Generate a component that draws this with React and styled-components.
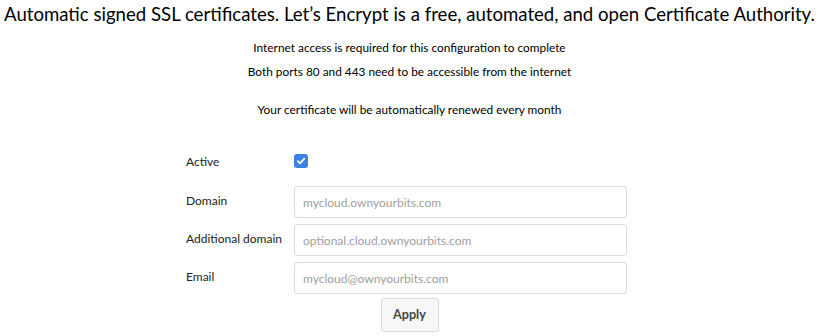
import styled, { createGlobalStyle } from "styled-components"

const GlobalStyle = createGlobalStyle`
    html, body {
        margin: 0;
        padding: 0;
        background: #ffffff;
        font-family: Lato, "Open Sans", sans-serif;
        color: #000000;
    }
`

const Page = styled.div`
    display: flex;
    flex-direction: column;
    align-items: center;
    width: 819px;
`

const Title = styled.h2`
    font-size: 18.6px;
    font-weight: 400;
    margin: 2px 0 0 0;
    line-height: 24px;
    white-space: nowrap;
`

const Info = styled.div`
    display: flex;
    flex-direction: column;
    align-items: center;
    font-size: 11.85px;
    margin-top: 10px;

    p {
        margin: 0;
        line-height: 24px;
    }

    .gap {
        margin-top: 14px;
    }
`

const Form = styled.div`
    display: grid;
    grid-template-columns: 108px 333px;
    row-gap: 6px;
    margin-top: 23px;
    margin-left: -6px;
`

const Label = styled.label`
    box-sizing: border-box;
    display: flex;
    align-items: center;
    height: 32px;
    padding-bottom: ${(p) => (p.$first ? "0" : "4px")};
    margin-bottom: ${(p) => (p.$first ? "3px" : "0")};
    font-size: 12px;
    color: #222;
`

const Field = styled.div`
    display: flex;
    align-items: center;
    height: 32px;
    margin-bottom: ${(p) => (p.$first ? "3px" : "0")};
`

const Input = styled.input`
    box-sizing: border-box;
    width: 100%;
    height: 32px;
    border: 1px solid #dbdbdb;
    border-radius: 3px;
    padding: 0 8px;
    font-family: Lato, sans-serif;
    font-size: 12px;
    color: #222;

    &::placeholder {
        color: #a0a0a0;
    }
`

const Check = styled.span`
    display: inline-flex;
    align-items: center;
    justify-content: center;
    width: 14px;
    height: 14px;
    border-radius: 3px;
    background: #3b82e0;
`

const Apply = styled.button`
    box-sizing: border-box;
    margin-top: 4px;
    width: 58px;
    height: 34px;
    padding: 0 0 2px 0;
    border: 1px solid #dbdbdb;
    border-radius: 3px;
    background: #f7f7f7;
    font-family: Lato, sans-serif;
    font-size: 12.6px;
    font-weight: 700;
    color: #444;
`

const fields = [
    { label: "Domain", placeholder: "mycloud.ownyourbits.com" },
    { label: "Additional domain", placeholder: "optional.cloud.ownyourbits.com" },
    { label: "Email", placeholder: "mycloud@ownyourbits.com" },
]

export default function App() {
    return (
        <Page>
            <GlobalStyle />
            <Title>Automatic signed SSL certificates. Let’s Encrypt is a free, automated, and open Certificate Authority.</Title>

            <Info>
                <p>Internet access is required for this configuration to complete</p>
                <p>Both ports 80 and 443 need to be accessible from the internet</p>
                <p className="gap">Your certificate will be automatically renewed every month</p>
            </Info>

            <Form>
                <Label $first>Active</Label>
                <Field $first>
                    <Check>
                        <svg width="10" height="10" viewBox="0 0 10 10">
                            <path d="M1.8 5.2 L4 7.3 L8.3 2.6" fill="none" stroke="#fff" strokeWidth="1.8" strokeLinecap="round" strokeLinejoin="round" />
                        </svg>
                    </Check>
                </Field>
                {fields.map((f) => (
                    <>
                        <Label key={f.label}>{f.label}</Label>
                        <Field>
                            <Input placeholder={f.placeholder} />
                        </Field>
                    </>
                ))}
            </Form>

            <Apply>Apply</Apply>
        </Page>
    )
}
